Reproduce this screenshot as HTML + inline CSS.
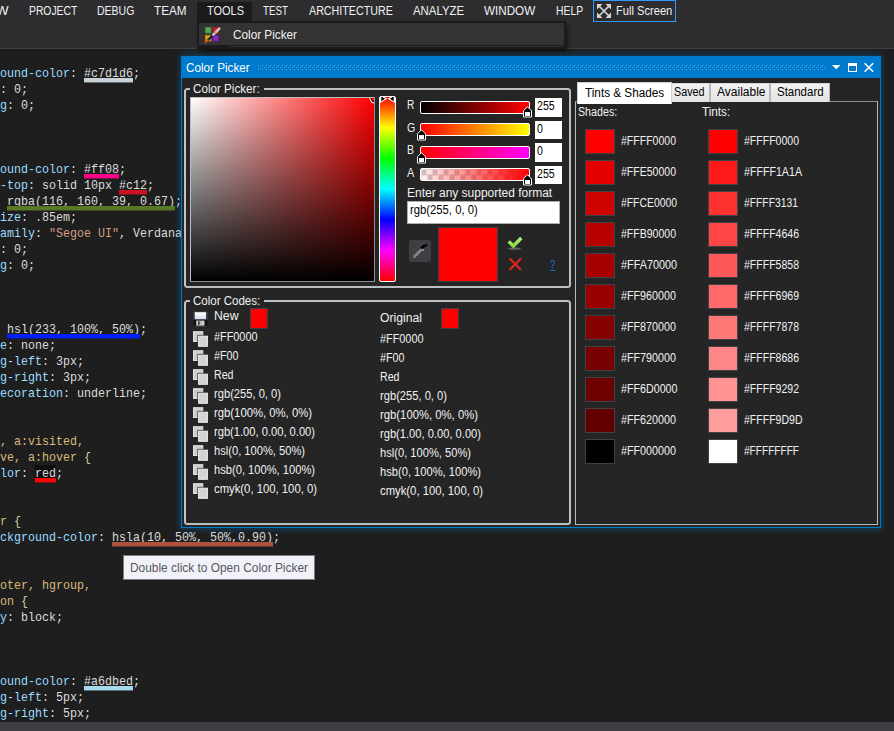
<!DOCTYPE html>
<html lang="en"><head><meta charset="utf-8"><title>Color Picker</title>
<style>
html,body{margin:0;padding:0;}
body{width:894px;height:731px;overflow:hidden;background:#1e1e1e;position:relative;}
.a{position:absolute;box-sizing:border-box;}
.t{position:absolute;white-space:pre;line-height:1;transform-origin:0 0;display:block;}
.ts{font-family:"Liberation Sans",sans-serif;}
.tm{font-family:"Liberation Mono",monospace;}
svg{position:absolute;overflow:visible;}

</style></head><body>
<div id="editor">
<span class="t tm" style="left:0.0px;top:67px;font-size:13px;color:#9cdcfe;transform:scaleX(0.8973);">ound-color</span>
<span class="t tm" style="left:70.0px;top:67px;font-size:13px;color:#dcdcdc;transform:scaleX(0.8969);">: </span>
<span class="t tm" style="left:84.0px;top:67px;font-size:13px;color:#dcdcdc;transform:scaleX(0.8973);">#c7d1d6</span>
<span class="t tm" style="left:133.0px;top:67px;font-size:13px;color:#dcdcdc;transform:scaleX(0.8960);">;</span>
<div class="a" style="left:84.0px;top:78px;width:49.0px;height:5px;background:linear-gradient(#c7d1d6 0 4px, #c7d1d670 4px 5px);"></div>
<span class="t tm" style="left:0.0px;top:83px;font-size:13px;color:#dcdcdc;transform:scaleX(0.8969);">: </span>
<span class="t tm" style="left:14.0px;top:83px;font-size:13px;color:#dcdcdc;transform:scaleX(0.8960);">0</span>
<span class="t tm" style="left:21.0px;top:83px;font-size:13px;color:#dcdcdc;transform:scaleX(0.8960);">;</span>
<span class="t tm" style="left:0.0px;top:99px;font-size:13px;color:#9cdcfe;transform:scaleX(0.8960);">g</span>
<span class="t tm" style="left:7.0px;top:99px;font-size:13px;color:#dcdcdc;transform:scaleX(0.8969);">: </span>
<span class="t tm" style="left:21.0px;top:99px;font-size:13px;color:#dcdcdc;transform:scaleX(0.8960);">0</span>
<span class="t tm" style="left:28.0px;top:99px;font-size:13px;color:#dcdcdc;transform:scaleX(0.8960);">;</span>
<span class="t tm" style="left:0.0px;top:163px;font-size:13px;color:#9cdcfe;transform:scaleX(0.8973);">ound-color</span>
<span class="t tm" style="left:70.0px;top:163px;font-size:13px;color:#dcdcdc;transform:scaleX(0.8969);">: </span>
<span class="t tm" style="left:84.0px;top:163px;font-size:13px;color:#dcdcdc;transform:scaleX(0.8971);">#ff08</span>
<span class="t tm" style="left:119.0px;top:163px;font-size:13px;color:#dcdcdc;transform:scaleX(0.8960);">;</span>
<div class="a" style="left:84.0px;top:174px;width:35.0px;height:5px;background:linear-gradient(#ff0088 0 4px, #ff008870 4px 5px);"></div>
<span class="t tm" style="left:0.0px;top:179px;font-size:13px;color:#9cdcfe;transform:scaleX(0.8969);">-top</span>
<span class="t tm" style="left:28.0px;top:179px;font-size:13px;color:#dcdcdc;transform:scaleX(0.8969);">: </span>
<span class="t tm" style="left:42.0px;top:179px;font-size:13px;color:#dcdcdc;transform:scaleX(0.8972);">solid 10px #c12</span>
<span class="t tm" style="left:147.0px;top:179px;font-size:13px;color:#dcdcdc;transform:scaleX(0.8960);">;</span>
<div class="a" style="left:119.0px;top:190px;width:28.0px;height:5px;background:linear-gradient(#cc1122 0 4px, #cc112270 4px 5px);"></div>
<span class="t tm" style="left:0.0px;top:195px;font-size:13px;color:#dcdcdc;transform:scaleX(0.8972);"> rgba(116, 160, 39, 0.67)</span>
<span class="t tm" style="left:175.0px;top:195px;font-size:13px;color:#dcdcdc;transform:scaleX(0.8960);">;</span>
<div class="a" style="left:7.0px;top:206px;width:168.0px;height:5px;background:linear-gradient(#587925 0 4px, #58792570 4px 5px);"></div>
<span class="t tm" style="left:0.0px;top:211px;font-size:13px;color:#9cdcfe;transform:scaleX(0.8972);">ize</span>
<span class="t tm" style="left:21.0px;top:211px;font-size:13px;color:#dcdcdc;transform:scaleX(0.8969);">: </span>
<span class="t tm" style="left:35.0px;top:211px;font-size:13px;color:#dcdcdc;transform:scaleX(0.8971);">.85em</span>
<span class="t tm" style="left:70.0px;top:211px;font-size:13px;color:#dcdcdc;transform:scaleX(0.8960);">;</span>
<span class="t tm" style="left:0.0px;top:227px;font-size:13px;color:#9cdcfe;transform:scaleX(0.8971);">amily</span>
<span class="t tm" style="left:35.0px;top:227px;font-size:13px;color:#dcdcdc;transform:scaleX(0.8969);">: </span>
<span class="t tm" style="left:49.0px;top:227px;font-size:13px;color:#d69d85;transform:scaleX(0.8973);">"Segoe UI"</span>
<span class="t tm" style="left:119.0px;top:227px;font-size:13px;color:#dcdcdc;transform:scaleX(0.8972);">, Verdana, Arial</span>
<span class="t tm" style="left:0.0px;top:243px;font-size:13px;color:#dcdcdc;transform:scaleX(0.8969);">: </span>
<span class="t tm" style="left:14.0px;top:243px;font-size:13px;color:#dcdcdc;transform:scaleX(0.8960);">0</span>
<span class="t tm" style="left:21.0px;top:243px;font-size:13px;color:#dcdcdc;transform:scaleX(0.8960);">;</span>
<span class="t tm" style="left:0.0px;top:259px;font-size:13px;color:#9cdcfe;transform:scaleX(0.8960);">g</span>
<span class="t tm" style="left:7.0px;top:259px;font-size:13px;color:#dcdcdc;transform:scaleX(0.8969);">: </span>
<span class="t tm" style="left:21.0px;top:259px;font-size:13px;color:#dcdcdc;transform:scaleX(0.8960);">0</span>
<span class="t tm" style="left:28.0px;top:259px;font-size:13px;color:#dcdcdc;transform:scaleX(0.8960);">;</span>
<span class="t tm" style="left:0.0px;top:323px;font-size:13px;color:#dcdcdc;transform:scaleX(0.8973);"> hsl(233, 100%, 50%)</span>
<span class="t tm" style="left:140.0px;top:323px;font-size:13px;color:#dcdcdc;transform:scaleX(0.8960);">;</span>
<div class="a" style="left:7.0px;top:334px;width:133.0px;height:5px;background:linear-gradient(#001eff 0 4px, #001eff70 4px 5px);"></div>
<span class="t tm" style="left:0.0px;top:339px;font-size:13px;color:#9cdcfe;transform:scaleX(0.8960);">e</span>
<span class="t tm" style="left:7.0px;top:339px;font-size:13px;color:#dcdcdc;transform:scaleX(0.8969);">: </span>
<span class="t tm" style="left:21.0px;top:339px;font-size:13px;color:#dcdcdc;transform:scaleX(0.8969);">none</span>
<span class="t tm" style="left:49.0px;top:339px;font-size:13px;color:#dcdcdc;transform:scaleX(0.8960);">;</span>
<span class="t tm" style="left:0.0px;top:355px;font-size:13px;color:#9cdcfe;transform:scaleX(0.8972);">g-left</span>
<span class="t tm" style="left:42.0px;top:355px;font-size:13px;color:#dcdcdc;transform:scaleX(0.8969);">: </span>
<span class="t tm" style="left:56.0px;top:355px;font-size:13px;color:#dcdcdc;transform:scaleX(0.8972);">3px</span>
<span class="t tm" style="left:77.0px;top:355px;font-size:13px;color:#dcdcdc;transform:scaleX(0.8960);">;</span>
<span class="t tm" style="left:0.0px;top:371px;font-size:13px;color:#9cdcfe;transform:scaleX(0.8973);">g-right</span>
<span class="t tm" style="left:49.0px;top:371px;font-size:13px;color:#dcdcdc;transform:scaleX(0.8969);">: </span>
<span class="t tm" style="left:63.0px;top:371px;font-size:13px;color:#dcdcdc;transform:scaleX(0.8972);">3px</span>
<span class="t tm" style="left:84.0px;top:371px;font-size:13px;color:#dcdcdc;transform:scaleX(0.8960);">;</span>
<span class="t tm" style="left:0.0px;top:387px;font-size:13px;color:#9cdcfe;transform:scaleX(0.8972);">ecoration</span>
<span class="t tm" style="left:63.0px;top:387px;font-size:13px;color:#dcdcdc;transform:scaleX(0.8969);">: </span>
<span class="t tm" style="left:77.0px;top:387px;font-size:13px;color:#dcdcdc;transform:scaleX(0.8972);">underline</span>
<span class="t tm" style="left:140.0px;top:387px;font-size:13px;color:#dcdcdc;transform:scaleX(0.8960);">;</span>
<span class="t tm" style="left:0.0px;top:435px;font-size:13px;color:#d7ba7d;transform:scaleX(0.8972);">, a:visited,</span>
<span class="t tm" style="left:0.0px;top:451px;font-size:13px;color:#d7ba7d;transform:scaleX(0.8972);">ve, a:hover </span>
<span class="t tm" style="left:84.0px;top:451px;font-size:13px;color:#dccfa4;transform:scaleX(0.8960);">{</span>
<div class="a" style="left:35px;top:465px;width:21px;height:16px;background:#0f0f0f;"></div>
<span class="t tm" style="left:0.0px;top:467px;font-size:13px;color:#9cdcfe;transform:scaleX(0.8972);">lor</span>
<span class="t tm" style="left:21.0px;top:467px;font-size:13px;color:#dcdcdc;transform:scaleX(0.8969);">: </span>
<span class="t tm" style="left:35.0px;top:467px;font-size:13px;color:#dcdcdc;transform:scaleX(0.8972);">red</span>
<span class="t tm" style="left:56.0px;top:467px;font-size:13px;color:#dcdcdc;transform:scaleX(0.8960);">;</span>
<div class="a" style="left:35.0px;top:478px;width:21.0px;height:5px;background:linear-gradient(#ff0000 0 4px, #ff000070 4px 5px);"></div>
<span class="t tm" style="left:0.0px;top:515px;font-size:13px;color:#d7ba7d;transform:scaleX(0.8969);">r </span>
<span class="t tm" style="left:14.0px;top:515px;font-size:13px;color:#dccfa4;transform:scaleX(0.8960);">{</span>
<span class="t tm" style="left:0.0px;top:531px;font-size:13px;color:#9cdcfe;transform:scaleX(0.8973);">ckground-color</span>
<span class="t tm" style="left:98.0px;top:531px;font-size:13px;color:#dcdcdc;transform:scaleX(0.8969);">: </span>
<span class="t tm" style="left:112.0px;top:531px;font-size:13px;color:#dcdcdc;transform:scaleX(0.8972);">hsla(10, 50%, 50%,0.90)</span>
<span class="t tm" style="left:273.0px;top:531px;font-size:13px;color:#dcdcdc;transform:scaleX(0.8960);">;</span>
<div class="a" style="left:112.0px;top:542px;width:161.0px;height:5px;background:linear-gradient(#b1503c 0 4px, #b1503c70 4px 5px);"></div>
<span class="t tm" style="left:0.0px;top:579px;font-size:13px;color:#d7ba7d;transform:scaleX(0.8972);">oter, hgroup,</span>
<span class="t tm" style="left:0.0px;top:595px;font-size:13px;color:#d7ba7d;transform:scaleX(0.8972);">on </span>
<span class="t tm" style="left:21.0px;top:595px;font-size:13px;color:#dccfa4;transform:scaleX(0.8960);">{</span>
<span class="t tm" style="left:0.0px;top:611px;font-size:13px;color:#9cdcfe;transform:scaleX(0.8960);">y</span>
<span class="t tm" style="left:7.0px;top:611px;font-size:13px;color:#dcdcdc;transform:scaleX(0.8969);">: </span>
<span class="t tm" style="left:21.0px;top:611px;font-size:13px;color:#dcdcdc;transform:scaleX(0.8971);">block</span>
<span class="t tm" style="left:56.0px;top:611px;font-size:13px;color:#dcdcdc;transform:scaleX(0.8960);">;</span>
<span class="t tm" style="left:0.0px;top:675px;font-size:13px;color:#9cdcfe;transform:scaleX(0.8973);">ound-color</span>
<span class="t tm" style="left:70.0px;top:675px;font-size:13px;color:#dcdcdc;transform:scaleX(0.8969);">: </span>
<span class="t tm" style="left:84.0px;top:675px;font-size:13px;color:#dcdcdc;transform:scaleX(0.8973);">#a6dbed</span>
<span class="t tm" style="left:133.0px;top:675px;font-size:13px;color:#dcdcdc;transform:scaleX(0.8960);">;</span>
<div class="a" style="left:84.0px;top:686px;width:49.0px;height:5px;background:linear-gradient(#a6dbed 0 4px, #a6dbed70 4px 5px);"></div>
<span class="t tm" style="left:0.0px;top:691px;font-size:13px;color:#9cdcfe;transform:scaleX(0.8972);">g-left</span>
<span class="t tm" style="left:42.0px;top:691px;font-size:13px;color:#dcdcdc;transform:scaleX(0.8969);">: </span>
<span class="t tm" style="left:56.0px;top:691px;font-size:13px;color:#dcdcdc;transform:scaleX(0.8972);">5px</span>
<span class="t tm" style="left:77.0px;top:691px;font-size:13px;color:#dcdcdc;transform:scaleX(0.8960);">;</span>
<span class="t tm" style="left:0.0px;top:707px;font-size:13px;color:#9cdcfe;transform:scaleX(0.8973);">g-right</span>
<span class="t tm" style="left:49.0px;top:707px;font-size:13px;color:#dcdcdc;transform:scaleX(0.8969);">: </span>
<span class="t tm" style="left:63.0px;top:707px;font-size:13px;color:#dcdcdc;transform:scaleX(0.8972);">5px</span>
<span class="t tm" style="left:84.0px;top:707px;font-size:13px;color:#dcdcdc;transform:scaleX(0.8960);">;</span>
<div class="a" style="left:0px;top:722px;width:894px;height:9px;background:#3e3e42;"></div>
</div>
<div id="menubar">
<div class="a" style="left:0px;top:0px;width:894px;height:49px;background:#2d2d30;"></div>
<div class="a" style="left:0px;top:47px;width:894px;height:1px;background:#323236;"></div>
<div class="a" style="left:0px;top:48px;width:894px;height:1px;background:#3f3f45;"></div>
<span class="t ts" style="left:-3.6px;top:5px;font-size:12px;color:#f1f1f1;transform:scaleX(1.1123);">W</span>
<span class="t ts" style="left:28.5px;top:5px;font-size:12px;color:#f1f1f1;transform:scaleX(0.8605);">PROJECT</span>
<span class="t ts" style="left:96.5px;top:5px;font-size:12px;color:#f1f1f1;transform:scaleX(0.8738);">DEBUG</span>
<span class="t ts" style="left:153.5px;top:5px;font-size:12px;color:#f1f1f1;transform:scaleX(0.9747);">TEAM</span>
<div class="a" style="left:197px;top:2px;width:55px;height:20px;background:#1b1b1c;"></div>
<span class="t ts" style="left:206.5px;top:5px;font-size:12px;color:#f1f1f1;transform:scaleX(0.9143);">TOOLS</span>
<span class="t ts" style="left:263px;top:5px;font-size:12px;color:#f1f1f1;transform:scaleX(0.8151);">TEST</span>
<span class="t ts" style="left:309px;top:5px;font-size:12px;color:#f1f1f1;transform:scaleX(0.8913);">ARCHITECTURE</span>
<span class="t ts" style="left:412.5px;top:5px;font-size:12px;color:#f1f1f1;transform:scaleX(0.9517);">ANALYZE</span>
<span class="t ts" style="left:483.5px;top:5px;font-size:12px;color:#f1f1f1;transform:scaleX(0.9723);">WINDOW</span>
<span class="t ts" style="left:555.5px;top:5px;font-size:12px;color:#f1f1f1;transform:scaleX(0.8642);">HELP</span>
<div class="a" style="left:593px;top:0px;width:83px;height:22px;background:#2d2d30;border:1px solid #3399ff;border-top:1px solid #3399ff;"></div>
<svg style="left:597px;top:4px" width="14" height="14" viewBox="0 0 14 14">
<g fill="#d4d4d4" stroke="none">
<path d="M0 0h5.500L0 5.500z"/><path d="M14 0v5.500L8.500 0z"/><path d="M0 14V8.500L5.500 14z"/><path d="M14 14H8.500L14 8.500z"/>
</g>
<path d="M2 2l10 10M12 2l-10 10" stroke="#d4d4d4" stroke-width="1.700" fill="none"/>
</svg>
<span class="t ts" style="left:616.3px;top:5px;font-size:12px;color:#f1f1f1;transform:scaleX(0.9275);">Full Screen</span>
</div>
<div id="color-picker-window">
<div class="a" style="left:181px;top:56px;width:700px;height:472px;background:#252526;border:1px solid #007acc;box-shadow:0 0 6px 1px rgba(0,122,204,0.42);"></div>
<div class="a" style="left:181px;top:56px;width:700px;height:22px;background:#007acc;"></div>
<span class="t ts" style="left:186.2px;top:62px;font-size:12px;color:#ffffff;transform:scaleX(0.9746);">Color Picker</span>
<svg style="left:258px;top:65px" width="568" height="5" viewBox="0 0 568 5">
<defs><pattern id="dots" width="4" height="4" patternUnits="userSpaceOnUse">
<rect x="0" y="0" width="1" height="1" fill="#59a8de"/><rect x="2" y="2" width="1" height="1" fill="#59a8de"/></pattern></defs>
<rect width="568" height="5" fill="url(#dots)"/></svg>
<svg style="left:830px;top:60px" width="46" height="14" viewBox="830 60 46 14">
<path d="M832 65h8.500l-4.250 4.300z" fill="#fff"/>
<path d="M848 63h9v9h-9z M849 66v5h7v-5z" fill="#fff" fill-rule="evenodd"/>
<path d="M864.600 63.300l8.600 8.400M873.200 63.300l-8.600 8.400" stroke="#fff" stroke-width="1.600" fill="none"/>
</svg>
<div class="a" style="left:184px;top:88px;width:387px;height:200px;border:2px solid #babfc2;border-left-color:#c0c4c7;border-radius:3.500px;"></div>
<div class="a" style="left:190.3px;top:86px;width:73.69999999999999px;height:6px;background:#252526;"></div>
<span class="t ts" style="left:193.3px;top:83px;font-size:12px;color:#f1f1f1;transform:scaleX(0.9711);">Color Picker:</span>
<div class="a" style="left:190px;top:97px;width:185px;height:185px;border:1px solid #8c8c8c;border-top-color:#bdbdbd;border-left-color:#bdbdbd;background:linear-gradient(to bottom, rgba(0,0,0,0), #000), linear-gradient(to right, #fff, #f00);overflow:hidden;"><svg style="left:172px;top:-6px" width="12" height="12" viewBox="0 0 12 12"><circle cx="12" cy="6" r="5" fill="none" stroke="#fff" stroke-width="1.100"/><circle cx="12" cy="6" r="4" fill="none" stroke="#000" stroke-width="1"/></svg></div>
<div class="a" style="left:379px;top:96px;width:17px;height:186px;border:1px solid #fff;border-radius:2px;background:linear-gradient(to bottom,#f00 0%,#ff0 16.67%,#0f0 33.33%,#0ff 50%,#00f 66.67%,#f0f 83.33%,#f00 100%);overflow:hidden;"><svg style="left:-1px;top:-1px" width="17" height="9" viewBox="0 0 17 9"><path d="M0 -2L8.400 2.700 0 7.500z M17 -2L8.600 2.700 17 7.500z" fill="#fff"/><path d="M2.300 0.200L6 2.700 2.300 5.200z M14.700 0.200L11 2.700 14.700 5.200z" fill="#000"/></svg></div>
<span class="t ts" style="left:407px;top:99px;font-size:12px;color:#f1f1f1;transform:scaleX(0.8418);">R</span>
<div class="a" style="left:420px;top:101px;width:110px;height:13px;border:1px solid #fff;border-radius:2px;background:linear-gradient(to right,#000,#f00);"></div>
<svg style="left:523.0px;top:106px" width="9" height="12" viewBox="0 0 9 12">
<path d="M4.500 0.700L8.500 4.800v6.200H0.500V4.800z" fill="#000" stroke="#fff" stroke-width="1"/>
<rect x="2" y="6" width="5" height="4" fill="#fff"/></svg>
<div class="a" style="left:535px;top:98px;width:27px;height:19px;background:#fff;"></div>
<span class="t ts" style="left:537.3px;top:100px;font-size:12px;color:#000;transform:scaleX(0.8836);">255</span>
<span class="t ts" style="left:407px;top:122px;font-size:12px;color:#f1f1f1;transform:scaleX(0.8883);">G</span>
<div class="a" style="left:420px;top:123px;width:110px;height:13px;border:1px solid #fff;border-radius:2px;background:linear-gradient(to right,#f00,#ff0);"></div>
<svg style="left:417.0px;top:129px" width="9" height="12" viewBox="0 0 9 12">
<path d="M4.500 0.700L8.500 4.800v6.200H0.500V4.800z" fill="#000" stroke="#fff" stroke-width="1"/>
<rect x="2" y="6" width="5" height="4" fill="#fff"/></svg>
<div class="a" style="left:535px;top:121px;width:27px;height:18px;background:#fff;"></div>
<span class="t ts" style="left:537.3px;top:123px;font-size:12px;color:#000;transform:scaleX(0.8822);">0</span>
<span class="t ts" style="left:407px;top:144px;font-size:12px;color:#f1f1f1;transform:scaleX(0.8733);">B</span>
<div class="a" style="left:420px;top:146px;width:110px;height:13px;border:1px solid #fff;border-radius:2px;background:linear-gradient(to right,#f00,#f0f);"></div>
<svg style="left:417.0px;top:152px" width="9" height="12" viewBox="0 0 9 12">
<path d="M4.500 0.700L8.500 4.800v6.200H0.500V4.800z" fill="#000" stroke="#fff" stroke-width="1"/>
<rect x="2" y="6" width="5" height="4" fill="#fff"/></svg>
<div class="a" style="left:535px;top:143px;width:27px;height:19px;background:#fff;"></div>
<span class="t ts" style="left:537.3px;top:145px;font-size:12px;color:#000;transform:scaleX(0.8822);">0</span>
<span class="t ts" style="left:407px;top:167px;font-size:12px;color:#f1f1f1;transform:scaleX(0.9107);">A</span>
<div class="a" style="left:420px;top:168px;width:110px;height:13px;border:1px solid #fff;border-radius:2px;background:linear-gradient(to right,rgba(255,0,0,0.04),rgba(255,0,0,1)),repeating-conic-gradient(#fff 0% 25%, #cdcdcd 0% 50%) 0.500px 0.500px/11px 11px;"></div>
<svg style="left:523.0px;top:174px" width="9" height="12" viewBox="0 0 9 12">
<path d="M4.500 0.700L8.500 4.800v6.200H0.500V4.800z" fill="#000" stroke="#fff" stroke-width="1"/>
<rect x="2" y="6" width="5" height="4" fill="#fff"/></svg>
<div class="a" style="left:535px;top:166px;width:27px;height:18px;background:#fff;"></div>
<span class="t ts" style="left:537.3px;top:168px;font-size:12px;color:#000;transform:scaleX(0.8836);">255</span>
<span class="t ts" style="left:407.3px;top:187px;font-size:12px;color:#f1f1f1;transform:scaleX(0.9985);">Enter any supported format</span>
<div class="a" style="left:407px;top:201px;width:153px;height:23px;background:#fff;border:1px solid #abadb3;"></div>
<span class="t ts" style="left:410.3px;top:204px;font-size:12px;color:#000;transform:scaleX(0.9397);">rgb(255, 0, 0)</span>
<div class="a" style="left:409px;top:240px;width:22px;height:22px;background:#3e3e43;border-radius:2.500px;"><svg style="left:0;top:0" width="22" height="22" viewBox="0 0 22 22">
<path d="M5.200 16.800L12.800 9.200" stroke="#8a8a8a" stroke-width="3.200" fill="none" stroke-dasharray="1 1"/>
<path d="M5.200 16.800L12.800 9.200" stroke="#a6a6a6" stroke-width="2.200" fill="none" opacity="0.550"/>
<path d="M4.300 17.700l1.100-1.100" stroke="#777" stroke-width="1.400"/>
<path d="M11.600 7.600L14.600 10.600" stroke="#bdbdbd" stroke-width="1.300" fill="none"/>
<path d="M12.700 7.700L14.500 6.500" stroke="#000" stroke-width="2.800" fill="none" stroke-linecap="round"/>
<path d="M14.500 6.500L17.500 4.800" stroke="#000" stroke-width="2" fill="none" stroke-linecap="round"/>
</svg></div>
<div class="a" style="left:438px;top:227px;width:60px;height:55px;background:#ff0000;border:1px solid #3f3f46;"></div>
<svg style="left:505px;top:235px" width="20" height="38" viewBox="505 235 20 38">
<defs><linearGradient id="gck" x1="0" y1="0" x2="0" y2="1"><stop offset="0" stop-color="#b6ec86"/><stop offset="1" stop-color="#86dc3c"/></linearGradient></defs>
<ellipse cx="514.500" cy="248.600" rx="6.500" ry="1.100" fill="#8a8a8a" opacity="0.600"/>
<path d="M508.700 241.400L513.400 246.000 521.300 238.100" stroke="url(#gck)" stroke-width="3.500" fill="none"/>
<path d="M510.200 259L520.400 269.200M520.400 259L510.200 269.200" stroke="#e32222" stroke-width="2.100" fill="none" stroke-linecap="round"/>
</svg>
<span class="t ts" style="left:550px;top:259px;font-size:12px;color:#0e70c0;text-decoration:underline;transform:scaleX(0.8075);">?</span>
<div class="a" style="left:184px;top:300px;width:387px;height:225px;border:2px solid #babfc2;border-left-color:#c0c4c7;border-radius:3.500px;"></div>
<div class="a" style="left:190.3px;top:298px;width:74.19999999999999px;height:6px;background:#252526;"></div>
<span class="t ts" style="left:193.3px;top:295px;font-size:12px;color:#f1f1f1;transform:scaleX(0.9596);">Color Codes:</span>
<svg style="left:193px;top:310.500px" width="15" height="16" viewBox="0 0 15 16">
<defs><linearGradient id="gsv" x1="0" y1="0" x2="0" y2="1"><stop offset="0" stop-color="#ffffff"/><stop offset="1" stop-color="#d4dbe8"/></linearGradient></defs>
<ellipse cx="7.500" cy="15.400" rx="7" ry="0.700" fill="#555" opacity="0.500"/>
<rect x="0.300" y="0.300" width="14.400" height="14.700" rx="1" fill="#3a404c"/><rect x="0.300" y="8.600" width="14.400" height="6.400" fill="#121317"/>
<rect x="1.800" y="1.200" width="11.200" height="7" fill="url(#gsv)"/>
<rect x="3.200" y="9.600" width="8.300" height="5" fill="#cfcfcf"/>
<rect x="5" y="10.400" width="1.600" height="3.300" fill="#26282c"/>
<rect x="7.600" y="10.400" width="0.800" height="3.300" fill="#9a9a9a"/>
</svg>
<span class="t ts" style="left:214px;top:310px;font-size:12px;color:#f1f1f1;transform:scaleX(1.0202);">New</span>
<div class="a" style="left:250px;top:308px;width:18px;height:21px;background:#ff0000;border:1px solid #3f3f46;"></div>
<span class="t ts" style="left:380px;top:312px;font-size:12px;color:#f1f1f1;transform:scaleX(1.0155);">Original</span>
<div class="a" style="left:441px;top:308px;width:18px;height:21px;background:#ff0000;border:1px solid #3f3f46;"></div>
<svg style="left:193px;top:331px" width="15" height="16" viewBox="0 0 15 16">
<rect x="0.500" y="0.700" width="9.300" height="9.800" fill="#cdcdcb" stroke="#e4e4e4"/>
<rect x="4.300" y="3.900" width="11" height="12.500" fill="#2c2c2c" opacity="0.850"/>
<rect x="5.600" y="5.200" width="8.800" height="10.100" fill="#d3d3d1" stroke="#ededed"/></svg>
<span class="t ts" style="left:214px;top:331px;font-size:12px;color:#f1f1f1;transform:scaleX(0.9057);">#FF0000</span>
<span class="t ts" style="left:380px;top:333px;font-size:12px;color:#f1f1f1;transform:scaleX(0.9057);">#FF0000</span>
<svg style="left:193px;top:350px" width="15" height="16" viewBox="0 0 15 16">
<rect x="0.500" y="0.700" width="9.300" height="9.800" fill="#cdcdcb" stroke="#e4e4e4"/>
<rect x="4.300" y="3.900" width="11" height="12.500" fill="#2c2c2c" opacity="0.850"/>
<rect x="5.600" y="5.200" width="8.800" height="10.100" fill="#d3d3d1" stroke="#ededed"/></svg>
<span class="t ts" style="left:214px;top:350px;font-size:12px;color:#f1f1f1;transform:scaleX(0.8955);">#F00</span>
<span class="t ts" style="left:380px;top:352px;font-size:12px;color:#f1f1f1;transform:scaleX(0.8955);">#F00</span>
<svg style="left:193px;top:369px" width="15" height="16" viewBox="0 0 15 16">
<rect x="0.500" y="0.700" width="9.300" height="9.800" fill="#cdcdcb" stroke="#e4e4e4"/>
<rect x="4.300" y="3.900" width="11" height="12.500" fill="#2c2c2c" opacity="0.850"/>
<rect x="5.600" y="5.200" width="8.800" height="10.100" fill="#d3d3d1" stroke="#ededed"/></svg>
<span class="t ts" style="left:214px;top:369px;font-size:12px;color:#f1f1f1;transform:scaleX(0.8857);">Red</span>
<span class="t ts" style="left:380px;top:371px;font-size:12px;color:#f1f1f1;transform:scaleX(0.8857);">Red</span>
<svg style="left:193px;top:388px" width="15" height="16" viewBox="0 0 15 16">
<rect x="0.500" y="0.700" width="9.300" height="9.800" fill="#cdcdcb" stroke="#e4e4e4"/>
<rect x="4.300" y="3.900" width="11" height="12.500" fill="#2c2c2c" opacity="0.850"/>
<rect x="5.600" y="5.200" width="8.800" height="10.100" fill="#d3d3d1" stroke="#ededed"/></svg>
<span class="t ts" style="left:214px;top:388px;font-size:12px;color:#f1f1f1;transform:scaleX(0.9300);">rgb(255, 0, 0)</span>
<span class="t ts" style="left:380px;top:390px;font-size:12px;color:#f1f1f1;transform:scaleX(0.9300);">rgb(255, 0, 0)</span>
<svg style="left:193px;top:407px" width="15" height="16" viewBox="0 0 15 16">
<rect x="0.500" y="0.700" width="9.300" height="9.800" fill="#cdcdcb" stroke="#e4e4e4"/>
<rect x="4.300" y="3.900" width="11" height="12.500" fill="#2c2c2c" opacity="0.850"/>
<rect x="5.600" y="5.200" width="8.800" height="10.100" fill="#d3d3d1" stroke="#ededed"/></svg>
<span class="t ts" style="left:214px;top:407px;font-size:12px;color:#f1f1f1;transform:scaleX(0.9417);">rgb(100%, 0%, 0%)</span>
<span class="t ts" style="left:380px;top:409px;font-size:12px;color:#f1f1f1;transform:scaleX(0.9417);">rgb(100%, 0%, 0%)</span>
<svg style="left:193px;top:426px" width="15" height="16" viewBox="0 0 15 16">
<rect x="0.500" y="0.700" width="9.300" height="9.800" fill="#cdcdcb" stroke="#e4e4e4"/>
<rect x="4.300" y="3.900" width="11" height="12.500" fill="#2c2c2c" opacity="0.850"/>
<rect x="5.600" y="5.200" width="8.800" height="10.100" fill="#d3d3d1" stroke="#ededed"/></svg>
<span class="t ts" style="left:214px;top:426px;font-size:12px;color:#f1f1f1;transform:scaleX(0.9287);">rgb(1.00, 0.00, 0.00)</span>
<span class="t ts" style="left:380px;top:428px;font-size:12px;color:#f1f1f1;transform:scaleX(0.9287);">rgb(1.00, 0.00, 0.00)</span>
<svg style="left:193px;top:445px" width="15" height="16" viewBox="0 0 15 16">
<rect x="0.500" y="0.700" width="9.300" height="9.800" fill="#cdcdcb" stroke="#e4e4e4"/>
<rect x="4.300" y="3.900" width="11" height="12.500" fill="#2c2c2c" opacity="0.850"/>
<rect x="5.600" y="5.200" width="8.800" height="10.100" fill="#d3d3d1" stroke="#ededed"/></svg>
<span class="t ts" style="left:214px;top:445px;font-size:12px;color:#f1f1f1;transform:scaleX(0.9280);">hsl(0, 100%, 50%)</span>
<span class="t ts" style="left:380px;top:447px;font-size:12px;color:#f1f1f1;transform:scaleX(0.9280);">hsl(0, 100%, 50%)</span>
<svg style="left:193px;top:464px" width="15" height="16" viewBox="0 0 15 16">
<rect x="0.500" y="0.700" width="9.300" height="9.800" fill="#cdcdcb" stroke="#e4e4e4"/>
<rect x="4.300" y="3.900" width="11" height="12.500" fill="#2c2c2c" opacity="0.850"/>
<rect x="5.600" y="5.200" width="8.800" height="10.100" fill="#d3d3d1" stroke="#ededed"/></svg>
<span class="t ts" style="left:214px;top:464px;font-size:12px;color:#f1f1f1;transform:scaleX(0.9289);">hsb(0, 100%, 100%)</span>
<span class="t ts" style="left:380px;top:466px;font-size:12px;color:#f1f1f1;transform:scaleX(0.9289);">hsb(0, 100%, 100%)</span>
<svg style="left:193px;top:483px" width="15" height="16" viewBox="0 0 15 16">
<rect x="0.500" y="0.700" width="9.300" height="9.800" fill="#cdcdcb" stroke="#e4e4e4"/>
<rect x="4.300" y="3.900" width="11" height="12.500" fill="#2c2c2c" opacity="0.850"/>
<rect x="5.600" y="5.200" width="8.800" height="10.100" fill="#d3d3d1" stroke="#ededed"/></svg>
<span class="t ts" style="left:214px;top:483px;font-size:12px;color:#f1f1f1;transform:scaleX(0.9416);">cmyk(0, 100, 100, 0)</span>
<span class="t ts" style="left:380px;top:485px;font-size:12px;color:#f1f1f1;transform:scaleX(0.9416);">cmyk(0, 100, 100, 0)</span>
<div class="a" style="left:575px;top:101px;width:303px;height:424px;border:1px solid #b9b9b9;border-top-color:#8c8e94;"></div>
<div class="a" style="left:671px;top:83px;width:39px;height:19px;background:#e9e9e9;border:1px solid #b8b8b8;border-bottom:none;border-top-color:#d6d6d6;background:linear-gradient(#f3f3f3,#e2e2e2);"></div>
<span class="t ts" style="left:674px;top:86px;font-size:12px;color:#000;transform:scaleX(0.8962);">Saved</span>
<div class="a" style="left:710px;top:83px;width:60px;height:19px;background:#e9e9e9;border:1px solid #b8b8b8;border-bottom:none;border-top-color:#d6d6d6;background:linear-gradient(#f3f3f3,#e2e2e2);"></div>
<span class="t ts" style="left:717px;top:86px;font-size:12px;color:#000;transform:scaleX(1.0003);">Available</span>
<div class="a" style="left:770px;top:83px;width:60px;height:19px;background:#e9e9e9;border:1px solid #b8b8b8;border-bottom:none;border-top-color:#d6d6d6;background:linear-gradient(#f3f3f3,#e2e2e2);"></div>
<span class="t ts" style="left:777px;top:86px;font-size:12px;color:#000;transform:scaleX(0.9568);">Standard</span>
<div class="a" style="left:577px;top:82px;width:95px;height:22px;background:#ffffff;border:1px solid #d0d0d0;border-bottom:none;"></div>
<span class="t ts" style="left:584.8px;top:87px;font-size:12px;color:#000;transform:scaleX(0.9785);">Tints &amp; Shades</span>
<span class="t ts" style="left:578.3px;top:106px;font-size:12px;color:#f1f1f1;transform:scaleX(0.8900);">Shades:</span>
<span class="t ts" style="left:701.8px;top:106px;font-size:12px;color:#f1f1f1;transform:scaleX(0.9756);">Tints:</span>
<div class="a" style="left:585px;top:129px;width:30px;height:25px;background:#FF0000;border:1px solid #3d4347;"></div>
<span class="t ts" style="left:621px;top:135px;font-size:12px;color:#f1f1f1;transform:scaleX(0.8771);">#FFFF0000</span>
<div class="a" style="left:708px;top:129px;width:30px;height:25px;background:#FF0000;border:1px solid #3d4347;"></div>
<span class="t ts" style="left:744px;top:135px;font-size:12px;color:#f1f1f1;transform:scaleX(0.8771);">#FFFF0000</span>
<div class="a" style="left:585px;top:160px;width:30px;height:25px;background:#E50000;border:1px solid #3d4347;"></div>
<span class="t ts" style="left:621px;top:166px;font-size:12px;color:#f1f1f1;transform:scaleX(0.8769);">#FFE50000</span>
<div class="a" style="left:708px;top:160px;width:30px;height:25px;background:#FF1A1A;border:1px solid #3d4347;"></div>
<span class="t ts" style="left:744px;top:166px;font-size:12px;color:#f1f1f1;transform:scaleX(0.8874);">#FFFF1A1A</span>
<div class="a" style="left:585px;top:191px;width:30px;height:25px;background:#CE0000;border:1px solid #3d4347;"></div>
<span class="t ts" style="left:621px;top:197px;font-size:12px;color:#f1f1f1;transform:scaleX(0.8655);">#FFCE0000</span>
<div class="a" style="left:708px;top:191px;width:30px;height:25px;background:#FF3131;border:1px solid #3d4347;"></div>
<span class="t ts" style="left:744px;top:197px;font-size:12px;color:#f1f1f1;transform:scaleX(0.8612);">#FFFF3131</span>
<div class="a" style="left:585px;top:222px;width:30px;height:25px;background:#B90000;border:1px solid #3d4347;"></div>
<span class="t ts" style="left:621px;top:228px;font-size:12px;color:#f1f1f1;transform:scaleX(0.8769);">#FFB90000</span>
<div class="a" style="left:708px;top:222px;width:30px;height:25px;background:#FF4646;border:1px solid #3d4347;"></div>
<span class="t ts" style="left:744px;top:228px;font-size:12px;color:#f1f1f1;transform:scaleX(0.8771);">#FFFF4646</span>
<div class="a" style="left:585px;top:253px;width:30px;height:25px;background:#A70000;border:1px solid #3d4347;"></div>
<span class="t ts" style="left:621px;top:259px;font-size:12px;color:#f1f1f1;transform:scaleX(0.9025);">#FFA70000</span>
<div class="a" style="left:708px;top:253px;width:30px;height:25px;background:#FF5858;border:1px solid #3d4347;"></div>
<span class="t ts" style="left:744px;top:259px;font-size:12px;color:#f1f1f1;transform:scaleX(0.8771);">#FFFF5858</span>
<div class="a" style="left:585px;top:284px;width:30px;height:25px;background:#960000;border:1px solid #3d4347;"></div>
<span class="t ts" style="left:621px;top:290px;font-size:12px;color:#f1f1f1;transform:scaleX(0.8959);">#FF960000</span>
<div class="a" style="left:708px;top:284px;width:30px;height:25px;background:#FF6969;border:1px solid #3d4347;"></div>
<span class="t ts" style="left:744px;top:290px;font-size:12px;color:#f1f1f1;transform:scaleX(0.8771);">#FFFF6969</span>
<div class="a" style="left:585px;top:315px;width:30px;height:25px;background:#870000;border:1px solid #3d4347;"></div>
<span class="t ts" style="left:621px;top:321px;font-size:12px;color:#f1f1f1;transform:scaleX(0.8959);">#FF870000</span>
<div class="a" style="left:708px;top:315px;width:30px;height:25px;background:#FF7878;border:1px solid #3d4347;"></div>
<span class="t ts" style="left:744px;top:321px;font-size:12px;color:#f1f1f1;transform:scaleX(0.8771);">#FFFF7878</span>
<div class="a" style="left:585px;top:346px;width:30px;height:25px;background:#790000;border:1px solid #3d4347;"></div>
<span class="t ts" style="left:621px;top:352px;font-size:12px;color:#f1f1f1;transform:scaleX(0.8959);">#FF790000</span>
<div class="a" style="left:708px;top:346px;width:30px;height:25px;background:#FF8686;border:1px solid #3d4347;"></div>
<span class="t ts" style="left:744px;top:352px;font-size:12px;color:#f1f1f1;transform:scaleX(0.8771);">#FFFF8686</span>
<div class="a" style="left:585px;top:377px;width:30px;height:25px;background:#6D0000;border:1px solid #3d4347;"></div>
<span class="t ts" style="left:621px;top:383px;font-size:12px;color:#f1f1f1;transform:scaleX(0.8915);">#FF6D0000</span>
<div class="a" style="left:708px;top:377px;width:30px;height:25px;background:#FF9292;border:1px solid #3d4347;"></div>
<span class="t ts" style="left:744px;top:383px;font-size:12px;color:#f1f1f1;transform:scaleX(0.8771);">#FFFF9292</span>
<div class="a" style="left:585px;top:408px;width:30px;height:25px;background:#620000;border:1px solid #3d4347;"></div>
<span class="t ts" style="left:621px;top:414px;font-size:12px;color:#f1f1f1;transform:scaleX(0.8959);">#FF620000</span>
<div class="a" style="left:708px;top:408px;width:30px;height:25px;background:#FF9D9D;border:1px solid #3d4347;"></div>
<span class="t ts" style="left:744px;top:414px;font-size:12px;color:#f1f1f1;transform:scaleX(0.8772);">#FFFF9D9D</span>
<div class="a" style="left:585px;top:439px;width:30px;height:25px;background:#000000;border:1px solid #3d4347;"></div>
<span class="t ts" style="left:621px;top:445px;font-size:12px;color:#f1f1f1;transform:scaleX(0.8959);">#FF000000</span>
<div class="a" style="left:708px;top:439px;width:30px;height:25px;background:#FFFFFF;border:1px solid #3d4347;"></div>
<span class="t ts" style="left:744px;top:445px;font-size:12px;color:#f1f1f1;transform:scaleX(0.8419);">#FFFFFFFF</span>
</div>
<div id="tools-menu">
<div class="a" style="left:197px;top:21px;width:369px;height:28px;background:#1b1b1c;box-shadow:3px 3px 4px -1px rgba(0,0,0,0.5);"></div>
<div class="a" style="left:199px;top:23px;width:365px;height:22px;background:#333334;"></div>
<div class="a" style="left:229px;top:46px;width:334px;height:1px;background:#333337;"></div>
<svg style="left:204px;top:26px" width="17" height="17" viewBox="0 0 17 17">
<rect x="1" y="1" width="6.500" height="6.500" fill="#3c8a3a"/><rect x="2" y="2" width="4.500" height="4.500" fill="#5aa556"/>
<rect x="8.500" y="1" width="6.500" height="6.500" fill="#b01818"/><rect x="9.500" y="2" width="4.500" height="4.500" fill="#cc2020"/>
<rect x="1" y="9" width="6.500" height="6.500" fill="#d07a10"/><rect x="2" y="10" width="4.500" height="4.500" fill="#f09a20"/>
<rect x="8.500" y="9" width="6.500" height="6.500" fill="#6a1a9a"/><rect x="9.500" y="10" width="4.500" height="4.500" fill="#8a2cc0"/>
<path d="M3.200 14.800L10.500 7.500" stroke="#1c2a44" stroke-width="2.400" fill="none"/>
<path d="M9.300 8.700L15.300 2.700" stroke="#c9c9c9" stroke-width="2.600" fill="none" stroke-linecap="round"/>
<path d="M10.500 6.200L11.800 7.500" stroke="#6a6a6a" stroke-width="1"/>
<path d="M1.600 16.400l2.400-2.400" stroke="#e8501a" stroke-width="1.600" stroke-linecap="round"/>
</svg>
<span class="t ts" style="left:233.3px;top:29px;font-size:12px;color:#f1f1f1;transform:scaleX(0.9792);">Color Picker</span>
</div>
<div id="tooltip">
<div class="a" style="left:123px;top:555px;width:192px;height:25px;background:#f1f2f7;border:1px solid #7c7c82;"></div>
<span class="t ts" style="left:130.3px;top:562px;font-size:12px;color:#575764;transform:scaleX(0.9921);">Double click to Open Color Picker</span>
</div>
</body></html>
